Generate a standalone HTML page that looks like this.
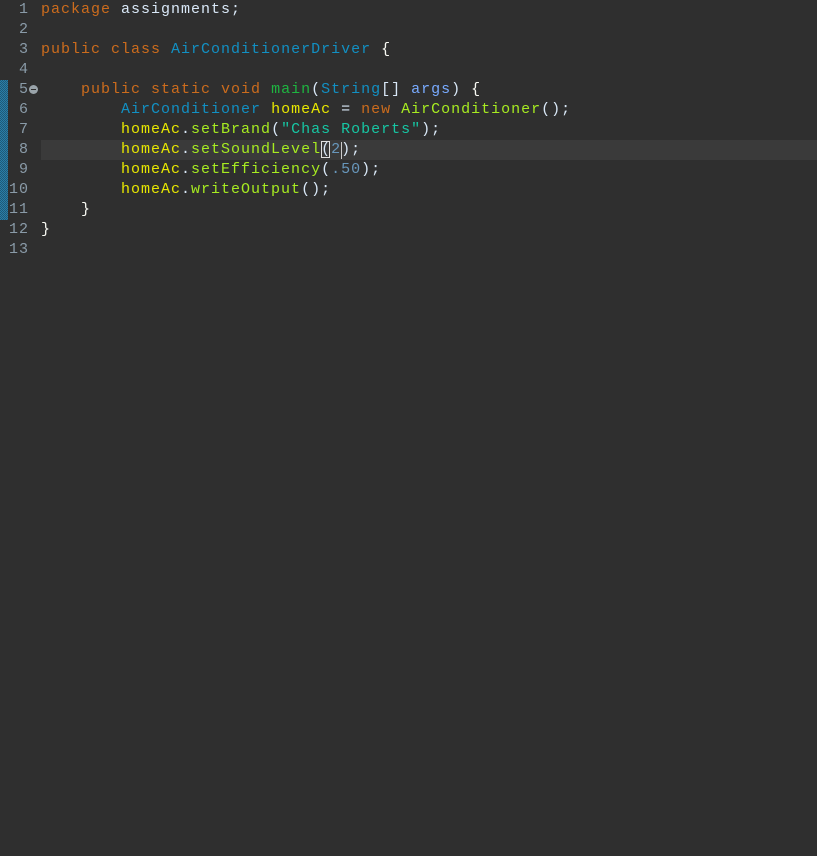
<!DOCTYPE html>
<html><head><meta charset="utf-8"><style>
html,body{margin:0;padding:0;background:#2f2f2f;width:817px;height:856px;overflow:hidden}
.bar{position:absolute;left:0;top:80px;width:8px;height:140px;background:repeating-conic-gradient(#2a7fa8 0 25%,#1f5a78 0 50%) 0 0/2px 2px}
.hl{position:absolute;left:41px;right:0;top:140px;height:20px;background:#3a3a3a}
.ln{position:absolute;left:0;width:29px;text-align:right;color:#8a9ba8;letter-spacing:1px}
.l{position:absolute;left:41px;white-space:pre;color:#d9e8f7}
.t{font:15px/20px "Liberation Mono",monospace;letter-spacing:1px}
.k{color:#cc6c1d}.c{color:#1290c3}.m{color:#1eb540}.a{color:#79abff}.v{color:#e8e800}.f{color:#a7ec21}.s{color:#17c6a3}.n{color:#6897bb}.b{color:#f9faf4}
.fold{position:absolute;left:29px;top:85px;width:9px;height:9px;border-radius:50%;background:#9aa4aa}
.fold:after{content:"";position:absolute;left:2px;top:4px;width:5px;height:1px;background:#2f2f2f}
.box{position:absolute;left:321px;top:141px;width:9px;height:17px;border:1px solid #e0e0e0;box-sizing:border-box}
.cur{position:absolute;left:341px;top:142px;width:1px;height:17px;background:#ccc}
</style></head><body>
<div class="bar"></div><div class="hl"></div>
<div class="t">
<div class="ln" style="top:0">1</div><div class="ln" style="top:20px">2</div><div class="ln" style="top:40px">3</div><div class="ln" style="top:60px">4</div><div class="ln" style="top:80px">5</div><div class="ln" style="top:100px">6</div><div class="ln" style="top:120px">7</div><div class="ln" style="top:140px">8</div><div class="ln" style="top:160px">9</div><div class="ln" style="top:180px">10</div><div class="ln" style="top:200px">11</div><div class="ln" style="top:220px">12</div><div class="ln" style="top:240px">13</div>
<div class="l" style="top:0"><span class="k">package</span> assignments;</div>
<div class="l" style="top:40px"><span class="k">public class</span> <span class="c">AirConditionerDriver</span> <span class="b">{</span></div>
<div class="l" style="top:80px">    <span class="k">public static void</span> <span class="m">main</span>(<span class="c">String</span>[] <span class="a">args</span>) <span class="b">{</span></div>
<div class="l" style="top:100px">        <span class="c">AirConditioner</span> <span class="v">homeAc</span> = <span class="k">new</span> <span class="f">AirConditioner</span>();</div>
<div class="l" style="top:120px">        <span class="v">homeAc</span>.<span class="f">setBrand</span>(<span class="s">"Chas Roberts"</span>);</div>
<div class="l" style="top:140px">        <span class="v">homeAc</span>.<span class="f">setSoundLevel</span>(<span class="n">2</span>);</div>
<div class="l" style="top:160px">        <span class="v">homeAc</span>.<span class="f">setEfficiency</span>(<span class="n">.50</span>);</div>
<div class="l" style="top:180px">        <span class="v">homeAc</span>.<span class="f">writeOutput</span>();</div>
<div class="l" style="top:200px">    <span class="b">}</span></div>
<div class="l" style="top:220px"><span class="b">}</span></div>
</div>
<div class="fold"></div><div class="box"></div><div class="cur"></div>
</body></html>
